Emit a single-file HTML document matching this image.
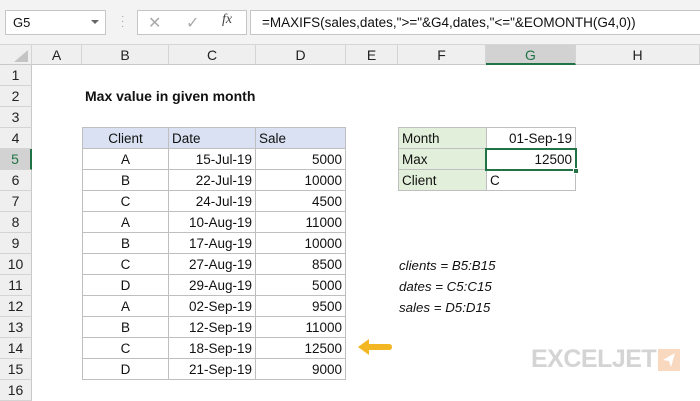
<!DOCTYPE html>
<html><head><style>
*{margin:0;padding:0;box-sizing:border-box}
body{width:700px;height:400px;overflow:hidden;background:#fff;font-family:"Liberation Sans",Arial,sans-serif;position:relative;font-size:13px;color:#111}
.a{position:absolute}
.top{left:0;top:0;width:700px;height:45px;background:#f3f3f3;border-bottom:1px solid #d6d6d6}
.box{background:#fff;border:1px solid #c6c6c6}
.ch{top:45px;height:20px;background:#efefef;border-right:1px solid #d4d4d4;border-bottom:1px solid #c8c8c8;text-align:center;line-height:20px;font-size:14px;color:#222}
.rh{left:0;width:32px;height:21px;background:#efefef;border-bottom:1px solid #d4d4d4;border-right:1px solid #c8c8c8;text-align:center;line-height:21px;font-size:14px;color:#222}
.c{height:21px;line-height:21px;border-right:1px solid #bfbfbf;border-bottom:1px solid #bfbfbf;padding:0 3px;white-space:nowrap;font-size:13.5px}
.r{text-align:right}.m{text-align:center}
.it{font-style:italic;font-size:13.3px}
</style></head><body>
<div class="a top"></div>
<div class="a box" style="left:5px;top:10px;width:101px;height:25px;line-height:23px;padding-left:7px;font-size:13px">G5</div>
<div class="a" style="left:91px;top:20px;width:0;height:0;border-left:4px solid transparent;border-right:4px solid transparent;border-top:4px solid #666"></div>
<div class="a" style="left:121px;top:14px;color:#999;font-size:10px;line-height:5px">·<br>·<br>·</div>
<div class="a box" style="left:137px;top:10px;width:110px;height:25px"></div>
<div class="a" style="left:148px;top:13px;color:#aaa;font-size:16px">✕</div>
<div class="a" style="left:186px;top:13px;color:#aaa;font-size:16px">✓</div>
<div class="a" style="left:222px;top:12px;color:#444;font-size:14px;font-style:italic;font-family:'Liberation Serif',serif">fx</div>
<div class="a box" style="left:250px;top:10px;width:460px;height:25px;line-height:23px;padding-left:11px;font-size:13.5px">=MAXIFS(sales,dates,"&gt;="&amp;G4,dates,"&lt;="&amp;EOMONTH(G4,0))</div>

<div class="a ch" style="left:0;width:32px"></div>
<div class="a" style="left:14px;top:50px;width:0;height:0;border-left:14px solid transparent;border-bottom:12px solid #c4c4c4"></div>
<div class="a ch" style="left:32px;width:50px">A</div>
<div class="a ch" style="left:82px;width:87px">B</div>
<div class="a ch" style="left:169px;width:87px">C</div>
<div class="a ch" style="left:256px;width:90px">D</div>
<div class="a ch" style="left:346px;width:52px">E</div>
<div class="a ch" style="left:398px;width:88px">F</div>
<div class="a ch" style="left:486px;width:90px;background:#d2d2d2;border-bottom:2px solid #217346;color:#217346">G</div>
<div class="a ch" style="left:576px;width:124px">H</div>

<div class="a rh" style="top:65px">1</div>
<div class="a rh" style="top:86px">2</div>
<div class="a rh" style="top:107px">3</div>
<div class="a rh" style="top:128px">4</div>
<div class="a rh" style="top:149px;background:#d2d2d2;border-right:2px solid #217346;color:#217346">5</div>
<div class="a rh" style="top:170px">6</div>
<div class="a rh" style="top:191px">7</div>
<div class="a rh" style="top:212px">8</div>
<div class="a rh" style="top:233px">9</div>
<div class="a rh" style="top:254px">10</div>
<div class="a rh" style="top:275px">11</div>
<div class="a rh" style="top:296px">12</div>
<div class="a rh" style="top:317px">13</div>
<div class="a rh" style="top:338px">14</div>
<div class="a rh" style="top:359px">15</div>
<div class="a rh" style="top:380px">16</div>

<div class="a" style="left:85px;top:86px;line-height:21px;font-weight:bold;font-size:14px">Max value in given month</div>

<div class="a" style="left:82px;top:127px;width:264px;border-top:1px solid #bfbfbf;border-left:1px solid #bfbfbf">
<div style="display:grid;grid-template-columns:86px 87px 90px">
<div class="c m" style="background:#d9e1f2">Client</div><div class="c" style="background:#d9e1f2">Date</div><div class="c" style="background:#d9e1f2">Sale</div>
<div class="c m">A</div><div class="c r">15-Jul-19</div><div class="c r">5000</div>
<div class="c m">B</div><div class="c r">22-Jul-19</div><div class="c r">10000</div>
<div class="c m">C</div><div class="c r">24-Jul-19</div><div class="c r">4500</div>
<div class="c m">A</div><div class="c r">10-Aug-19</div><div class="c r">11000</div>
<div class="c m">B</div><div class="c r">17-Aug-19</div><div class="c r">10000</div>
<div class="c m">C</div><div class="c r">27-Aug-19</div><div class="c r">8500</div>
<div class="c m">D</div><div class="c r">29-Aug-19</div><div class="c r">5000</div>
<div class="c m">A</div><div class="c r">02-Sep-19</div><div class="c r">9500</div>
<div class="c m">B</div><div class="c r">12-Sep-19</div><div class="c r">11000</div>
<div class="c m">C</div><div class="c r">18-Sep-19</div><div class="c r">12500</div>
<div class="c m">D</div><div class="c r">21-Sep-19</div><div class="c r">9000</div>
</div></div>

<div class="a" style="left:398px;top:127px;width:178px;border-top:1px solid #bfbfbf;border-left:1px solid #bfbfbf">
<div style="display:grid;grid-template-columns:88px 89px">
<div class="c" style="background:#e2efda">Month</div><div class="c r">01-Sep-19</div>
<div class="c" style="background:#e2efda">Max</div><div class="c r">12500</div>
<div class="c" style="background:#e2efda">Client</div><div class="c">C</div>
</div></div>
<div class="a" style="left:485px;top:148px;width:92px;height:23px;border:2px solid #217346"></div>
<div class="a" style="left:573px;top:168px;width:6px;height:6px;background:#217346;border:1px solid #fff"></div>

<div class="a it" style="left:399px;top:258px">clients = B5:B15</div>
<div class="a it" style="left:399px;top:279px">dates = C5:C15</div>
<div class="a it" style="left:399px;top:300px">sales = D5:D15</div>

<svg class="a" style="left:355px;top:337px" width="40" height="20"><path d="M3 10 L14 2 L14 7 L34 7 Q37 7 37 10 Q37 13 34 13 L14 13 L14 18 Z" fill="#f2b722"/></svg>

<div class="a" style="left:531px;top:346px;font-size:25px;font-weight:bold;color:#d4d4d4;letter-spacing:-0.5px;line-height:26px">EXCELJET</div>
<div class="a" style="left:658px;top:349px;width:22px;height:22px;background:#f9d8c0"></div>
<svg class="a" style="left:658px;top:349px" width="22" height="22"><path d="M5 11 L17 4 L13 18 L11 12 Z" fill="#fff"/></svg>
</body></html>
